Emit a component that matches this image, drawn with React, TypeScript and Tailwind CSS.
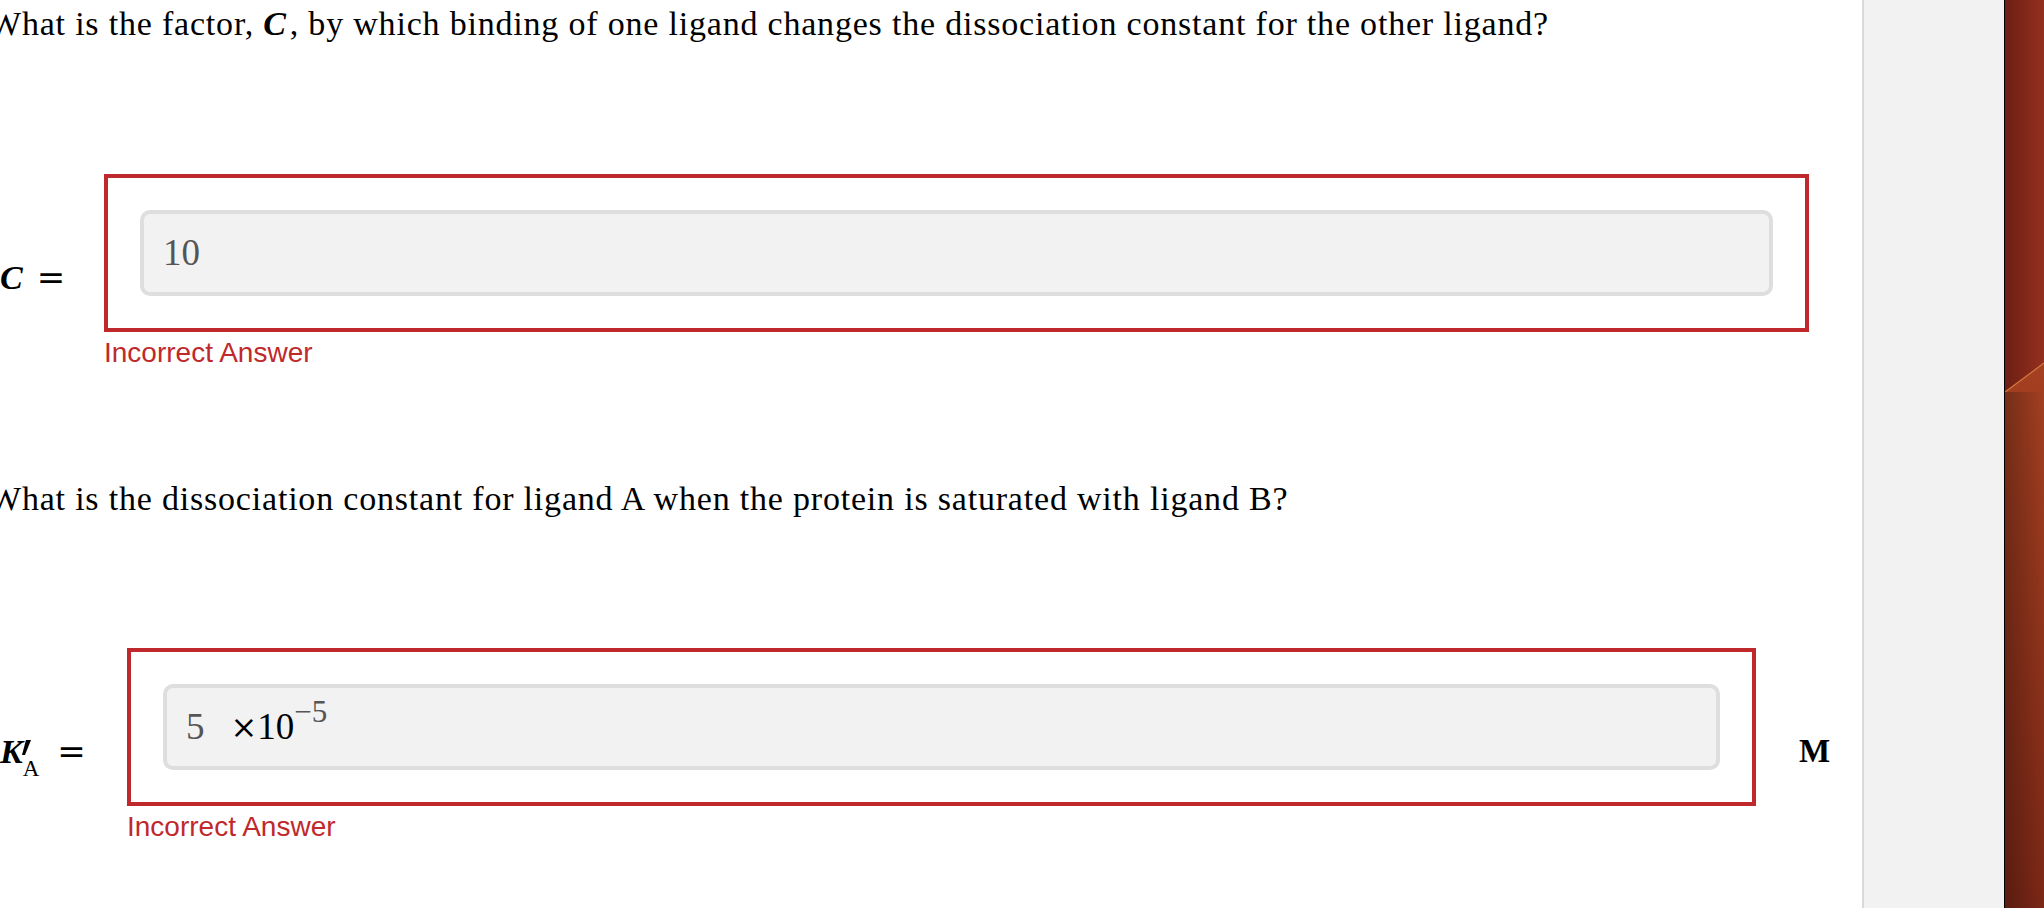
const serif = "font-['Liberation_Serif','Times_New_Roman',serif]";
const sans = "font-['Liberation_Sans',Arial,sans-serif]";
const symbol = "font-['DejaVu_Serif',serif]";

const Wallpaper = () => (
  <svg width="39" height="908" viewBox="0 0 39 908" className="block">
    <defs>
      <linearGradient id="wpTop" x1="0" y1="0" x2="1" y2="0">
        <stop offset="0" stopColor="#6e1e14" />
        <stop offset="1" stopColor="#93301f" />
      </linearGradient>
      <linearGradient id="wpBottom" x1="0" y1="0" x2="0" y2="1">
        <stop offset="0" stopColor="#b5552a" />
        <stop offset="0.45" stopColor="#a23e20" />
        <stop offset="1" stopColor="#7c2716" />
      </linearGradient>
      <linearGradient id="wpShade" x1="0" y1="0" x2="1" y2="0">
        <stop offset="0" stopColor="#000" stopOpacity="0.28" />
        <stop offset="1" stopColor="#000" stopOpacity="0" />
      </linearGradient>
    </defs>
    <rect x="0" y="0" width="39" height="908" fill="url(#wpBottom)" />
    <polygon points="0,0 39,0 39,363 0,392" fill="url(#wpTop)" />
    <line x1="0" y1="392" x2="39" y2="363" stroke="#d27a3a" strokeWidth="1.2" />
    <rect x="0" y="392" width="39" height="516" fill="url(#wpShade)" />
  </svg>
);

const AnswerBox = ({ width, children }: { width: string; children: React.ReactNode }) => (
  <div className="flex flex-col">
    <div className={`${width} border-4 border-[#c0292b] p-[32px]`}>
      <div className="flex h-[86px] items-center rounded-[10px] border-4 border-[#dedede] bg-[#f2f2f2] pl-[19px] whitespace-nowrap">
        {children}
      </div>
    </div>
    <div className={`${sans} mt-[5px] text-[28px] leading-[32px] text-[#c0292b]`}>Incorrect Answer</div>
  </div>
);

export default function App() {
  return (
    <div className="flex h-[908px] w-[2044px] overflow-hidden bg-white">
      <div className="w-[1864px] shrink-0 overflow-hidden border-r-2 border-[#d9d9d9] bg-white">
        <div className={`${serif} text-black`}>
          <p className="-ml-[11px] mt-[4px] whitespace-nowrap text-[34px] leading-[40px] tracking-[0.8px]">
            What is the factor, <b className="italic">C</b>
            <span className="ml-[3px]">, by which binding of one ligand changes the dissociation constant for the other ligand?</span>
          </p>

          <div className="mt-[130px] flex items-start">
            <div className="mt-[83px] flex w-[104px] shrink-0 items-baseline whitespace-nowrap text-[34px] leading-[40px]">
              <b className="italic">C</b>
              <span className={`${symbol} ml-[14px] text-[34px]`}>=</span>
            </div>
            <AnswerBox width="w-[1705px]">
              <span className="text-[37px] text-[#555]">10</span>
            </AnswerBox>
          </div>

          <p className="-ml-[11px] mt-[110px] whitespace-nowrap text-[34px] leading-[40px] tracking-[0.8px]">
            What is the dissociation constant for ligand A when the protein is saturated with ligand B?
          </p>

          <div className="mt-[129px] flex items-start">
            <div className="relative mt-[83px] flex w-[127px] shrink-0 items-baseline whitespace-nowrap text-[34px] leading-[40px]">
              <b className="italic">K</b>
              <span className="absolute left-[22px] top-[9px] h-[15px] w-[9px] bg-black [clip-path:polygon(44%_0,100%_0,33%_100%,0_100%)]" />
              <span className="relative top-[13px] text-[23px]">A</span>
              <span className={`${symbol} ml-[18px] text-[34px]`}>=</span>
            </div>
            <AnswerBox width="w-[1629px]">
              <span className="text-[37px] text-[#555]">5</span>
              <span className={`${symbol} ml-[26px] text-[32px] text-black`}>×</span>
              <span className="text-[37px] text-black">10</span>
              <span className="relative -top-[15px] text-[31px] text-[#555]">−5</span>
            </AnswerBox>
            <div className="ml-[43px] mt-[83px] text-[33px] font-bold leading-[40px]">M</div>
          </div>
        </div>
      </div>
      <div className="w-[140px] shrink-0 bg-[#f2f2f2]" />
      <div className="w-px shrink-0 bg-black" />
      <Wallpaper />
    </div>
  );
}
